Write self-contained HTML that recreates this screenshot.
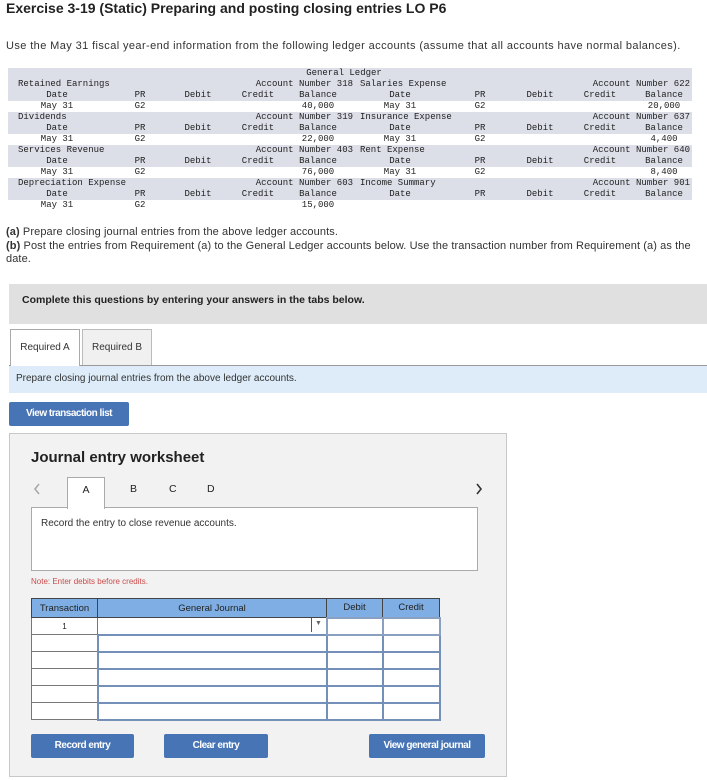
<!DOCTYPE html>
<html><head><meta charset="utf-8"><style>
*{margin:0;padding:0;box-sizing:border-box}
body{width:707px;height:780px;position:relative;background:#fff;font-family:"Liberation Sans",sans-serif;color:#222;overflow:hidden}
.a{position:absolute;white-space:nowrap}
.m{font-family:"Liberation Mono",monospace;font-size:9px;line-height:11px;color:#222}
.g{position:absolute;left:8px;width:684px;background:#dcdfe8}
.c{transform:translateX(-50%)}
.r{transform:translateX(-100%)}
.btn{position:absolute;background:#4674b5;color:#fff;font-weight:bold;font-size:10px;letter-spacing:-0.5px;text-align:center;border-radius:2px}
.jt td{border:1px solid #777;vertical-align:middle;padding:0}
</style></head><body>
<div class="a" style="left:6px;top:0;font-size:14px;font-weight:bold;letter-spacing:0px;color:#222">Exercise 3-19 (Static) Preparing and posting closing entries LO P6</div>
<div class="a" style="left:6px;top:40px;font-size:11px;letter-spacing:0.4px;color:#333">Use the May 31 fiscal year-end information from the following ledger accounts (assume that all accounts have normal balances).</div>

<div class="g" style="top:68px;height:33px"></div>
<div class="g" style="top:112px;height:22px"></div>
<div class="g" style="top:145px;height:22px"></div>
<div class="g" style="top:178px;height:22px"></div>

<div class="a m c" style="left:344px;top:68px">General Ledger</div>

<div class="a m" style="left:18px;top:79px">Retained Earnings</div>
<div class="a m r" style="left:353px;top:79px">Account Number 318</div>
<div class="a m" style="left:360px;top:79px">Salaries Expense</div>
<div class="a m r" style="left:690px;top:79px">Account Number 622</div>

<div class="a m" style="left:18px;top:112px">Dividends</div>
<div class="a m r" style="left:353px;top:112px">Account Number 319</div>
<div class="a m" style="left:360px;top:112px">Insurance Expense</div>
<div class="a m r" style="left:690px;top:112px">Account Number 637</div>

<div class="a m" style="left:18px;top:145px">Services Revenue</div>
<div class="a m r" style="left:353px;top:145px">Account Number 403</div>
<div class="a m" style="left:360px;top:145px">Rent Expense</div>
<div class="a m r" style="left:690px;top:145px">Account Number 640</div>

<div class="a m" style="left:18px;top:178px">Depreciation Expense</div>
<div class="a m r" style="left:353px;top:178px">Account Number 603</div>
<div class="a m" style="left:360px;top:178px">Income Summary</div>
<div class="a m r" style="left:690px;top:178px">Account Number 901</div>

<div class="a m c" style="left:57px;top:90px">Date</div><div class="a m c" style="left:140px;top:90px">PR</div><div class="a m c" style="left:198px;top:90px">Debit</div><div class="a m c" style="left:258px;top:90px">Credit</div><div class="a m c" style="left:318px;top:90px">Balance</div><div class="a m c" style="left:400px;top:90px">Date</div><div class="a m c" style="left:480px;top:90px">PR</div><div class="a m c" style="left:540px;top:90px">Debit</div><div class="a m c" style="left:600px;top:90px">Credit</div><div class="a m c" style="left:664px;top:90px">Balance</div>
<div class="a m c" style="left:57px;top:123px">Date</div><div class="a m c" style="left:140px;top:123px">PR</div><div class="a m c" style="left:198px;top:123px">Debit</div><div class="a m c" style="left:258px;top:123px">Credit</div><div class="a m c" style="left:318px;top:123px">Balance</div><div class="a m c" style="left:400px;top:123px">Date</div><div class="a m c" style="left:480px;top:123px">PR</div><div class="a m c" style="left:540px;top:123px">Debit</div><div class="a m c" style="left:600px;top:123px">Credit</div><div class="a m c" style="left:664px;top:123px">Balance</div>
<div class="a m c" style="left:57px;top:156px">Date</div><div class="a m c" style="left:140px;top:156px">PR</div><div class="a m c" style="left:198px;top:156px">Debit</div><div class="a m c" style="left:258px;top:156px">Credit</div><div class="a m c" style="left:318px;top:156px">Balance</div><div class="a m c" style="left:400px;top:156px">Date</div><div class="a m c" style="left:480px;top:156px">PR</div><div class="a m c" style="left:540px;top:156px">Debit</div><div class="a m c" style="left:600px;top:156px">Credit</div><div class="a m c" style="left:664px;top:156px">Balance</div>
<div class="a m c" style="left:57px;top:189px">Date</div><div class="a m c" style="left:140px;top:189px">PR</div><div class="a m c" style="left:198px;top:189px">Debit</div><div class="a m c" style="left:258px;top:189px">Credit</div><div class="a m c" style="left:318px;top:189px">Balance</div><div class="a m c" style="left:400px;top:189px">Date</div><div class="a m c" style="left:480px;top:189px">PR</div><div class="a m c" style="left:540px;top:189px">Debit</div><div class="a m c" style="left:600px;top:189px">Credit</div><div class="a m c" style="left:664px;top:189px">Balance</div>

<div class="a m c" style="left:57px;top:101px">May 31</div><div class="a m c" style="left:140px;top:101px">G2</div><div class="a m c" style="left:318px;top:101px">40,000</div><div class="a m c" style="left:400px;top:101px">May 31</div><div class="a m c" style="left:480px;top:101px">G2</div><div class="a m c" style="left:664px;top:101px">20,000</div>
<div class="a m c" style="left:57px;top:134px">May 31</div><div class="a m c" style="left:140px;top:134px">G2</div><div class="a m c" style="left:318px;top:134px">22,000</div><div class="a m c" style="left:400px;top:134px">May 31</div><div class="a m c" style="left:480px;top:134px">G2</div><div class="a m c" style="left:664px;top:134px">4,400</div>
<div class="a m c" style="left:57px;top:167px">May 31</div><div class="a m c" style="left:140px;top:167px">G2</div><div class="a m c" style="left:318px;top:167px">76,000</div><div class="a m c" style="left:400px;top:167px">May 31</div><div class="a m c" style="left:480px;top:167px">G2</div><div class="a m c" style="left:664px;top:167px">8,400</div>
<div class="a m c" style="left:57px;top:200px">May 31</div><div class="a m c" style="left:140px;top:200px">G2</div><div class="a m c" style="left:318px;top:200px">15,000</div>

<div class="a" style="left:6px;top:226px;font-size:11px;letter-spacing:0.1px;color:#333;line-height:13px"><b>(a)</b> Prepare closing journal entries from the above ledger accounts.</div>
<div class="a" style="left:6px;top:240px;font-size:11px;letter-spacing:0.1px;color:#333;line-height:13px;white-space:normal;width:701px"><b>(b)</b> Post the entries from Requirement (a) to the General Ledger accounts below. Use the transaction number from Requirement (a) as the date.</div>

<div class="a" style="left:9px;top:284px;width:698px;height:40px;background:#e0e0e0"></div>
<div class="a" style="left:22px;top:294px;font-size:10.5px;font-weight:bold;color:#222">Complete this questions by entering your answers in the tabs below.</div>

<div class="a" style="left:9px;top:365px;width:698px;height:1px;background:#999"></div>
<div class="a" style="left:10px;top:329px;width:70px;height:37px;background:#fff;border:1px solid #aaa;border-bottom:none;font-size:10px;text-align:center;line-height:36px;color:#333">Required A</div>
<div class="a" style="left:82px;top:329px;width:70px;height:36px;background:#f0f0f0;border:1px solid #bbb;border-bottom:none;font-size:10px;text-align:center;line-height:36px;color:#333">Required B</div>
<div class="a" style="left:9px;top:366px;width:698px;height:27px;background:#ddecf8"></div>
<div class="a" style="left:16px;top:373px;font-size:10px;color:#333">Prepare closing journal entries from the above ledger accounts.</div>

<div class="btn" style="left:9px;top:402px;width:120px;height:24px;line-height:24px">View transaction list</div>

<div class="a" style="left:9px;top:433px;width:498px;height:344px;background:#f2f2f2;border:1px solid #c8c8c8"></div>
<div class="a" style="left:31px;top:449px;font-size:15px;font-weight:bold;color:#222">Journal entry worksheet</div>
<svg class="a" style="left:32px;top:482px" width="10" height="14"><path d="M7 2 L3 7 L7 12" stroke="#aaa" stroke-width="1.6" fill="none"/></svg>
<svg class="a" style="left:474px;top:482px" width="10" height="14"><path d="M3 2 L7 7 L3 12" stroke="#333" stroke-width="1.6" fill="none"/></svg>
<div class="a" style="left:31px;top:507px;width:447px;height:64px;background:#fff;border:1px solid #aaa"></div>
<div class="a" style="left:67px;top:477px;width:38px;height:32px;background:#fff;border:1px solid #aaa;border-bottom:none;text-align:center;font-size:10.5px;line-height:24px">A</div>
<div class="a" style="left:130px;top:483px;font-size:10.5px">B</div>
<div class="a" style="left:169px;top:483px;font-size:10.5px">C</div>
<div class="a" style="left:207px;top:483px;font-size:10.5px">D</div>
<div class="a" style="left:41px;top:518px;font-size:10px;color:#333">Record the entry to close revenue accounts.</div>
<div class="a" style="left:31px;top:577px;font-size:8px;color:#c94c4c">Note: Enter debits before credits.</div>

<table class="a jt" style="left:31px;top:598px;border-collapse:collapse;font-size:9.5px">
<tr style="background:#7eaee3;height:19px"><td style="width:66px;text-align:center;border-color:#444">Transaction</td><td style="width:229px;text-align:center;border-color:#444">General Journal</td><td style="width:56px;text-align:center;border-color:#444">Debit</td><td style="width:57px;text-align:center;border-color:#444">Credit</td></tr>
<tr style="height:17px;background:#fff"><td style="text-align:center;font-size:8px">1</td><td style="border:1px dotted #3a6fb5"></td><td style="border:2px solid #8aa0c0"></td><td style="border:2px solid #8aa0c0"></td></tr>
<tr style="height:17px;background:#fff"><td></td><td style="border:2px solid #7490b8"></td><td style="border:2px solid #7490b8"></td><td style="border:2px solid #7490b8"></td></tr>
<tr style="height:17px;background:#fff"><td></td><td style="border:2px solid #7490b8"></td><td style="border:2px solid #7490b8"></td><td style="border:2px solid #7490b8"></td></tr>
<tr style="height:17px;background:#fff"><td></td><td style="border:2px solid #7490b8"></td><td style="border:2px solid #7490b8"></td><td style="border:2px solid #7490b8"></td></tr>
<tr style="height:17px;background:#fff"><td></td><td style="border:2px solid #7490b8"></td><td style="border:2px solid #7490b8"></td><td style="border:2px solid #7490b8"></td></tr>
<tr style="height:17px;background:#fff"><td></td><td style="border:2px solid #7490b8"></td><td style="border:2px solid #7490b8"></td><td style="border:2px solid #7490b8"></td></tr>
</table>
<div class="a" style="left:311px;top:618px;width:1px;height:14px;background:#555"></div>
<div class="a" style="left:315px;top:620px;font-size:7px;color:#666">&#9660;</div>

<div class="btn" style="left:31px;top:734px;width:103px;height:24px;line-height:24px">Record entry</div>
<div class="btn" style="left:164px;top:734px;width:104px;height:24px;line-height:24px">Clear entry</div>
<div class="btn" style="left:369px;top:734px;width:116px;height:24px;line-height:24px">View general journal</div>
</body></html>
